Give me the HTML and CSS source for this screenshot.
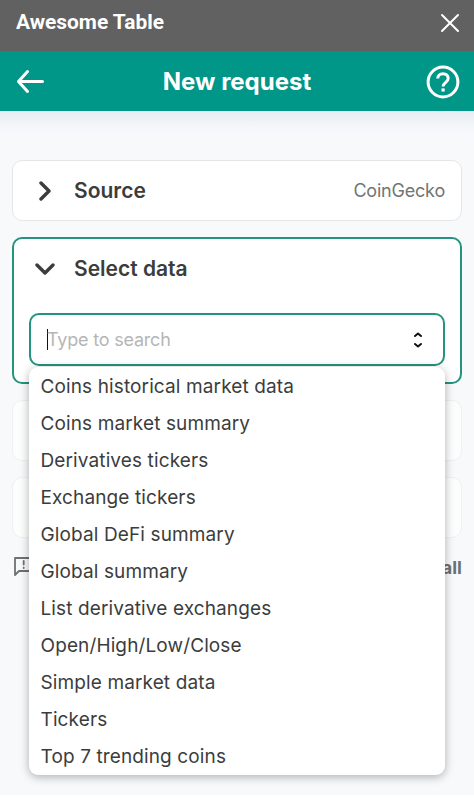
FILE: index.html
```html
<!DOCTYPE html>
<html lang="en">
<head>
<meta charset="utf-8">
<title>Awesome Table</title>
<link rel="stylesheet" href="styles.css">
</head>
<body>
<div class="titlebar">
  <span class="titlebar-name">Awesome Table</span>
  <svg class="close" viewBox="0 0 20 20"><path d="M2 2 18 18M18 2 2 18"/></svg>
</div>
<header class="header">
  <svg class="back" viewBox="0 0 28 26"><path d="M25.5 12.5H2M10.500 2.500 1.500 12.500l9 10"/></svg>
  <h1 class="header-title">New request</h1>
  <svg class="help" viewBox="0 0 34 34"><circle cx="17" cy="17" r="14.9"/><path d="M11.7 13.6c0-3 2.3-4.9 5.3-4.9s5.2 1.9 5.2 4.6c0 4-5.1 4.2-5.1 8.3"/><path class="help-dot" d="M15.5 23.4h3.2v3.2h-3.2z"/></svg>
</header>
<main class="content">
  <section class="card">
    <svg class="chevron" viewBox="0 0 20 20"><path d="M6 2 14 10 6 18"/></svg>
    <h2 class="card-title source-title">Source</h2>
    <span class="card-value">CoinGecko</span>
  </section>
  <section class="card card-open">
    <div class="card-head">
      <svg class="chevron" viewBox="0 0 20 20"><path d="M2 6 10 14 18 6"/></svg>
      <h2 class="card-title">Select data</h2>
    </div>
    <div class="combo">
      <span class="caret"></span>
      <span class="placeholder">Type to search</span>
      <svg class="sort" viewBox="0 0 10 18"><path d="M2 5 5 2.500 8 5M2 13 5 15.500 8 13"/></svg>
      <ul class="menu">
        <li><span>Coins historical market data</span></li>
        <li><span>Coins market summary</span></li>
        <li><span>Derivatives tickers</span></li>
        <li><span>Exchange tickers</span></li>
        <li><span>Global DeFi summary</span></li>
        <li><span>Global summary</span></li>
        <li><span>List derivative exchanges</span></li>
        <li><span>Open/High/Low/Close</span></li>
        <li><span>Simple market data</span></li>
        <li><span>Tickers</span></li>
        <li><span>Top 7 trending coins</span></li>
      </ul>
    </div>
  </section>
  <section class="card card-disabled"></section>
  <section class="card card-disabled"></section>
  <footer class="footer">
    <svg class="feedback" viewBox="0 0 20 20"><path d="M1 18V1H19V14H5Z"/><path d="M9.7 4v3.6M9.7 10.6v.4"/></svg>
    <span class="footer-link">all</span>
  </footer>
</main>
</body>
</html>
```
FILE: styles.css
```css
* {
  box-sizing: border-box;
}

body {
  margin: 0;
  height: 798px;
  overflow: hidden;
  background: #fff;
  color: #3b3d3d;
  font-family: Inter, "Liberation Sans", sans-serif;
}

svg {
  display: block;
  flex: none;
  fill: none;
  stroke: currentColor;
  stroke-linecap: round;
  stroke-linejoin: round;
}

h1, h2, ul {
  margin: 0;
  padding: 0;
}

.titlebar {
  display: flex;
  align-items: flex-start;
  justify-content: space-between;
  height: 51px;
  padding: 10px 14px 0 16px;
  background: #616161;
  color: #fff;
}

.titlebar-name {
  font: 700 20.9px/24px Roboto, sans-serif;
}

.close {
  width: 20px;
  height: 20px;
  margin-top: 3px;
  stroke-width: 2;
}

.header {
  display: flex;
  align-items: center;
  justify-content: space-between;
  height: 60px;
  padding: 1px 14px 0 17px;
  background: #009688;
  color: #fff;
}

.back {
  width: 28px;
  height: 26px;
  stroke-width: 3;
}

.header-title {
  padding-left: 3px;
  font-size: 24px;
  font-weight: 700;
  line-height: 30px;
}

.help {
  width: 34px;
  height: 34px;
  stroke-width: 3;
  stroke-linecap: butt;
}

.help-dot {
  fill: currentColor;
  stroke: none;
}

.content {
  height: 684px;
  padding: 49px 12px 0 11.5px;
  background: linear-gradient(#e8edf3, #f8f9fb 22px);
}

.card {
  display: flex;
  align-items: center;
  height: 61px;
  margin-bottom: 16px;
  padding: 0 16px 0 22.5px;
  border: 1.5px solid #e5e6e8;
  border-radius: 10px;
  background: #fff;
}

.card-open {
  display: block;
  height: 147px;
  padding: 0 16px 0 16.5px;
  border: 2px solid #24937f;
}

.card-head {
  display: flex;
  align-items: center;
  height: 74px;
  padding: 0 5px;
  margin-top: -7px;
}

.chevron {
  width: 20px;
  height: 20px;
  margin-right: 19px;
  stroke-width: 3.4;
}

.card-title {
  font-size: 21px;
  font-weight: 600;
  line-height: 26px;
}

.card-value {
  margin-left: auto;
  color: #6f7675;
  font-size: 18px;
  letter-spacing: -0.2px;
}

.combo {
  position: relative;
  display: flex;
  align-items: center;
  width: 416px;
  height: 53px;
  margin: 7px 0 0 -1px;
  padding: 0 20px 0 16px;
  border: 2px solid #24937f;
  border-radius: 10px;
}

.caret {
  width: 1px;
  height: 21px;
  margin-right: -1px;
  background: #111;
}

.placeholder {
  color: #b6b6b6;
  font-size: 18px;
  letter-spacing: -0.2px;
}

.sort {
  width: 10px;
  height: 18px;
  margin-left: auto;
  color: #111;
  stroke-width: 2;
}

.menu {
  position: absolute;
  z-index: 2;
  top: 52px;
  left: -2px;
  width: 416px;
  height: 408px;
  padding: 0.5px 11.5px 0;
  border-radius: 9px;
  background: #fff;
  box-shadow: 0 2px 10px rgba(0, 0, 0, 0.3);
  list-style: none;
  font-size: 19px;
  line-height: 37px;
  letter-spacing: 0.12px;
}

.menu li {
  height: 37.05px;
}

.card-disabled {
  border-color: #eff0f2;
  background: #fcfdfd;
}

.footer {
  display: flex;
  align-items: center;
  justify-content: space-between;
  height: 26px;
  color: #6c7272;
  font-size: 18px;
  font-weight: 700;
}

.feedback {
  width: 20px;
  height: 20px;
  margin-left: 2px;
  stroke-width: 1.8;
}
```
